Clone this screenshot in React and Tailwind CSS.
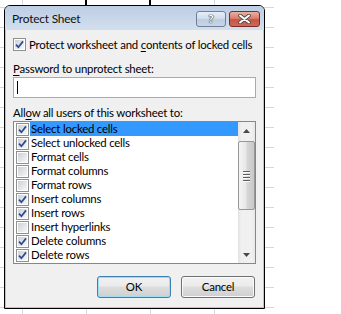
import React from 'react'

const perms = [
  ['Select locked cells', true],
  ['Select unlocked cells', true],
  ['Format cells', false],
  ['Format columns', false],
  ['Format rows', false],
  ['Insert columns', true],
  ['Insert rows', true],
  ['Insert hyperlinks', false],
  ['Delete columns', true],
  ['Delete rows', true],
]

function Check({ checked }) {
  return (
    <span className="w-[13px] h-[13px] shrink-0 border border-[#8e8f8f] bg-white p-[1px] flex">
      <span className="flex-1 bg-gradient-to-br from-[#cdd1d6] to-[#f7f7f7] flex items-center justify-center">
        {checked && (
          <svg width="9" height="9" viewBox="0 0 9 9">
            <path d="M1 4.6 L3.4 7.2 L8 1.4" fill="none" stroke="#2d4a94" strokeWidth="1.7" />
          </svg>
        )}
      </span>
    </span>
  )
}

function Grid() {
  const rows = []
  for (let y = 7; y < 314; y += 20) rows.push(y)
  return (
    <svg className="absolute inset-0" width="341" height="314">
      {rows.map(y => (
        <line key={y} x1="0" x2="274" y1={y + 0.5} y2={y + 0.5} stroke="#d0d7e5" />
      ))}
      {[22, 86, 150, 214].map(x => (
        <line key={x} x1={x + 0.5} x2={x + 0.5} y1="0" y2="314" stroke="#d0d7e5" />
      ))}
      <rect x="85" y="0" width="2" height="7" fill="#000" />
      <rect x="149" y="0" width="2" height="7" fill="#000" />
    </svg>
  )
}

function Arrow({ down }) {
  return (
    <svg width="7" height="4" viewBox="0 0 7 4">
      <polygon points={down ? '0,0 7,0 3.5,4' : '0,4 7,4 3.5,0'} fill="#4a4a4a" />
    </svg>
  )
}

function Button({ children, primary }) {
  return (
    <div
      className={`w-[74px] h-[22px] rounded-[3px] border flex items-center justify-center text-black bg-[linear-gradient(#f2f2f2,#ebebeb_45%,#dddddd_50%,#cfcfcf)] ${
        primary
          ? 'border-[#3c7fb1] shadow-[inset_0_0_0_1px_#9fdcf6]'
          : 'border-[#707070] shadow-[inset_0_0_0_1px_#fafafa]'
      }`}
    >
      {children}
    </div>
  )
}

export default function App() {
  return (
    <div className="relative w-[341px] h-[314px] bg-white overflow-hidden font-['Lato',sans-serif] text-[11.4px] tracking-[-0.2px] text-black">
      <Grid />

      <div className="absolute left-[4px] top-[5px] w-[261px] h-[304px] border border-black rounded-t-[6px] flex flex-col overflow-hidden">
        {/* Title bar */}
        <div className="h-[24px] shrink-0 flex items-start bg-gradient-to-b from-[#bccde4] to-[#d3dfee]">
          <span className="ml-[7px] mt-[5px] text-[11.9px] leading-[15px] text-[#111] whitespace-nowrap">Protect Sheet</span>
          <div className="ml-auto mr-[4px] mt-[5px] flex gap-[3px]">
            <div className="w-[30px] h-[16px] rounded-[3px] border border-[#6f7f96] bg-[linear-gradient(#e6eef8,#d2deed_45%,#bccbdf_55%,#c9d6e7)] flex items-center justify-center">
              <span className="text-[12px] font-bold leading-[12px] text-white [text-shadow:0_0_1px_#3a3a3a,0_0_1px_#3a3a3a,0_0_1px_#3a3a3a]">?</span>
            </div>
            <div className="w-[31px] h-[16px] rounded-[3px] border border-[#7c2c25] bg-[linear-gradient(#eab0a4,#d9806f_45%,#c85442_55%,#d06a58)] flex items-center justify-center">
              <svg width="13" height="10" viewBox="0 0 13 10">
                <path d="M2 1.5 L11 8.5 M11 1.5 L2 8.5" stroke="#4a4a4a" strokeWidth="3.6" strokeLinecap="round" />
                <path d="M2 1.5 L11 8.5 M11 1.5 L2 8.5" stroke="#fff" strokeWidth="2" strokeLinecap="round" />
              </svg>
            </div>
          </div>
        </div>

        {/* Body */}
        <div className="flex-1 border-x border-b border-[#9bcbed] bg-[#f0f0f0] px-[7px] pt-[8px] flex flex-col">
          <div className="h-[13px] flex items-center gap-[3px] whitespace-nowrap">
            <Check checked />
            <span className="leading-[15px]">
              Protect worksheet and <span className="underline underline-offset-2">c</span>ontents of locked cells
            </span>
          </div>

          <div className="mt-[10px] leading-[15px] whitespace-nowrap">
            <span className="underline underline-offset-2">P</span>assword to unprotect sheet:
          </div>
          <div className="mt-[1px] h-[21px] border border-[#a4abb4] bg-white flex items-center">
            <span className="ml-[3px] w-[1px] h-[13px] bg-black" />
          </div>

          <div className="mt-[7px] leading-[15px] whitespace-nowrap">
            All<span className="underline underline-offset-2">o</span>w all users of this worksheet to:
          </div>
          <div className="mt-[1px] h-[143px] border border-[#828790] bg-white flex">
            <div className="flex-1 flex flex-col">
              {perms.map(([label, checked], i) => (
                <div key={label} className="h-[14px] flex items-center whitespace-nowrap">
                  <span className="ml-[2px]">
                    <Check checked={checked} />
                  </span>
                  <span
                    className={`ml-[1px] h-[14px] flex items-center pl-[1px] leading-[14px] ${
                      i === 0 ? 'flex-1 bg-[#3399ff]' : ''
                    }`}
                  >
                    {label}
                  </span>
                </div>
              ))}
            </div>

            {/* Scrollbar */}
            <div className="w-[17px] flex flex-col bg-[linear-gradient(90deg,#e2e2e2,#f0f0f0_20%,#f0f0f0_80%,#e8e8e8)]">
              <div className="h-[17px] flex items-center justify-center">
                <Arrow />
              </div>
              <div className="mt-[2px] h-[69px] rounded-[2px] border border-[#979797] bg-[linear-gradient(90deg,#f4f4f4,#e8e8e8_45%,#d6d6d6_55%,#c8c8c8)] flex flex-col items-center justify-center gap-[1px]">
                <span className="w-[7px] h-[1px] bg-[#5e5e5e] shadow-[0_1px_0_#fafafa]" />
                <span className="mt-[1px] w-[7px] h-[1px] bg-[#5e5e5e] shadow-[0_1px_0_#fafafa]" />
                <span className="mt-[1px] w-[7px] h-[1px] bg-[#5e5e5e] shadow-[0_1px_0_#fafafa]" />
                <span className="mt-[1px] w-[7px] h-[1px] bg-[#5e5e5e] shadow-[0_1px_0_#fafafa]" />
              </div>
              <div className="flex-1" />
              <div className="h-[17px] flex items-center justify-center">
                <Arrow down />
              </div>
            </div>
          </div>

          <div className="mt-[12px] flex justify-end gap-[10px] pr-[1px]">
            <Button primary>OK</Button>
            <Button>Cancel</Button>
          </div>
        </div>
      </div>
    </div>
  )
}
